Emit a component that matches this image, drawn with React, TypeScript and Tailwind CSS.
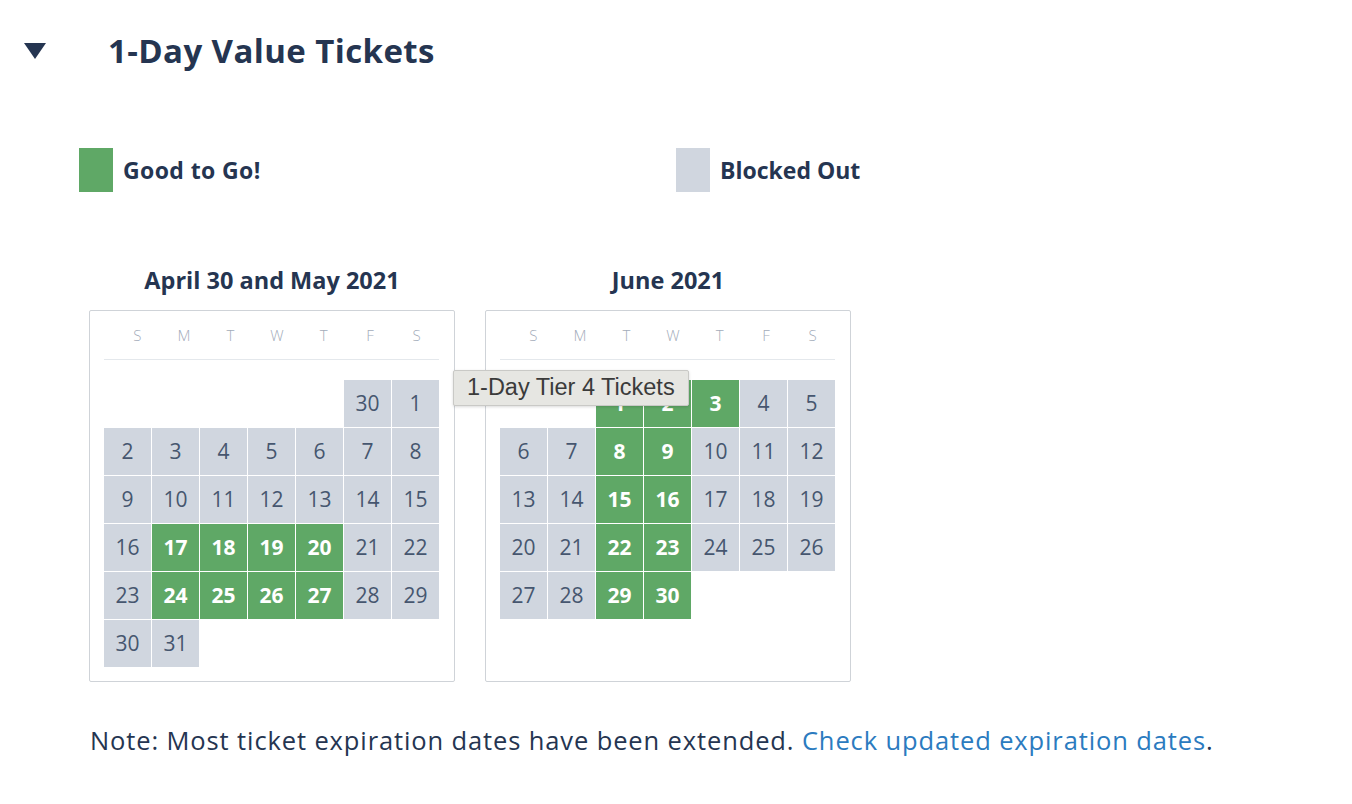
import React from 'react';

type Cell = { d: number; ok: boolean } | null;

const dow = ['S', 'M', 'T', 'W', 'T', 'F', 'S'];

const g = (d: number): Cell => ({ d, ok: true });
const b = (d: number): Cell => ({ d, ok: false });

const may: Cell[] = [
  null, null, null, null, null, b(30), b(1),
  b(2), b(3), b(4), b(5), b(6), b(7), b(8),
  b(9), b(10), b(11), b(12), b(13), b(14), b(15),
  b(16), g(17), g(18), g(19), g(20), b(21), b(22),
  b(23), g(24), g(25), g(26), g(27), b(28), b(29),
  b(30), b(31),
];

const june: Cell[] = [
  null, null, g(1), g(2), g(3), b(4), b(5),
  b(6), b(7), g(8), g(9), b(10), b(11), b(12),
  b(13), b(14), g(15), g(16), b(17), b(18), b(19),
  b(20), b(21), g(22), g(23), b(24), b(25), b(26),
  b(27), b(28), g(29), g(30),
];

function Calendar({ title, cells, children }: { title: string; cells: Cell[]; children?: React.ReactNode }) {
  return (
    <div className="w-[366px]">
      <h3 className="text-center text-[23.5px] font-bold text-[#253551] leading-[30px] mb-[15px]">{title}</h3>
      <div className="relative h-[372px] border border-[#cfd3d8] rounded-[2px] px-[14px] pt-[10px] bg-white">
        <div className="grid grid-cols-7 pl-[10px] h-[28px] items-center">
          {dow.map((d, i) => (
            <span key={i} className="text-center text-[15px] font-light text-[#a3acba]">{d}</span>
          ))}
        </div>
        <div className="h-px bg-[#e4e8ec] mt-[10px] mr-px" />
        <div className="grid grid-cols-[repeat(7,48px)] grid-rows-[repeat(6,48px)] mt-[20px]">
          {cells.map((c, i) =>
            c ? (
              <div
                key={i}
                className={`flex items-center justify-center border-r border-b border-white text-[21px] ${
                  c.ok ? 'bg-[#5fa866] text-white font-bold' : 'bg-[#d0d6df] text-[#46566f]'
                }`}
              >
                {c.d}
              </div>
            ) : (
              <div key={i} />
            )
          )}
        </div>
        {children}
      </div>
    </div>
  );
}

export default function App() {
  return (
    <div className="min-h-[804px] bg-white font-['Open_Sans','Noto_Sans',sans-serif] text-[#253551]">
      {/* Header */}
      <div className="flex items-center h-[76px] pt-[26px]">
        <svg className="ml-[24px] w-[22px] h-[16px]" viewBox="0 0 22 16">
          <path d="M0 0H22L11 16Z" fill="#253551" />
        </svg>
        <h2 className="ml-[62px] text-[33px] font-bold tracking-[0.4px]">1-Day Value Tickets</h2>
      </div>

      {/* Legend */}
      <div className="flex mt-[72px] ml-[79px]">
        <div className="flex items-center w-[597px]">
          <div className="w-[34px] h-[44px] bg-[#5fa866]" />
          <span className="ml-[10px] text-[23px] font-bold tracking-[0.4px]">Good to Go!</span>
        </div>
        <div className="flex items-center">
          <div className="w-[34px] h-[44px] bg-[#d0d6df]" />
          <span className="ml-[10px] text-[23px] font-bold">Blocked Out</span>
        </div>
      </div>

      {/* Calendars */}
      <div className="flex gap-[30px] ml-[89px] mt-[73px]">
        <Calendar title="April 30 and May 2021" cells={may} />
        <Calendar title="June 2021" cells={june}>
          <div className="absolute left-[-33px] top-[59px] h-[36px] px-[13px] flex items-center bg-[#e6e6e2] border border-[#c9c9c6] rounded-[2px] shadow-[0_1px_3px_rgba(0,0,0,0.15)] font-['Liberation_Sans',sans-serif] text-[23.5px] text-[#3b3b3b] whitespace-nowrap z-10">
            1-Day Tier 4 Tickets
          </div>
        </Calendar>
      </div>

      {/* Note */}
      <p className="ml-[90px] mt-[42px] text-[25.5px] leading-[32px] tracking-[0.88px]">
        Note: Most ticket expiration dates have been extended.{' '}
        <a href="#" className="text-[#2b7bbf]">Check updated expiration dates</a>.
      </p>
    </div>
  );
}
